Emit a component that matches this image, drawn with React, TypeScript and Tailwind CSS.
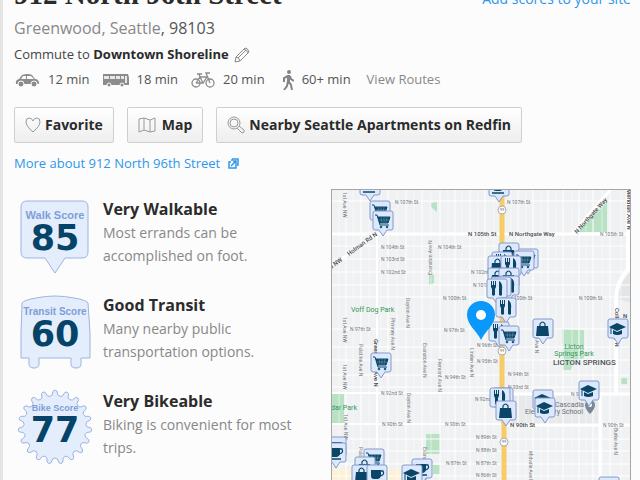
import type { ReactNode } from "react";

type IconName = "cart" | "fork" | "bag" | "cup" | "school";

const markers: { x: number; y: number; icon: IconName }[] = [
  { x: 29, y: -13, icon: "cup" },
  { x: 39, y: 12, icon: "cart" },
  { x: 42, y: 22, icon: "cart" },
  { x: 158, y: -12, icon: "cup" },
  { x: 168, y: 54, icon: "bag" },
  { x: 187, y: 60, icon: "cart" },
  { x: 183, y: 62, icon: "cart" },
  { x: 161, y: 63, icon: "fork" },
  { x: 157, y: 67, icon: "bag" },
  { x: 170, y: 67, icon: "fork" },
  { x: 157, y: 79, icon: "bag" },
  { x: 168, y: 79, icon: "bag" },
  { x: 168, y: 87, icon: "fork" },
  { x: 160, y: 88, icon: "fork" },
  { x: 156, y: 90, icon: "fork" },
  { x: 165, y: 109, icon: "fork" },
  { x: 158, y: 133, icon: "fork" },
  { x: 168, y: 137, icon: "cart" },
  { x: 202, y: 130, icon: "bag" },
  { x: 277, y: 130, icon: "school" },
  { x: 40, y: 164, icon: "cart" },
  { x: -5, y: 248, icon: "cup" },
  { x: -5, y: 254, icon: "cup" },
  { x: 33, y: 260, icon: "cart" },
  { x: 24, y: 268, icon: "bag" },
  { x: 21, y: 276, icon: "bag" },
  { x: 36, y: 276, icon: "cup" },
  { x: 81, y: 270, icon: "cup" },
  { x: 71, y: 276, icon: "school" },
  { x: 162, y: 199, icon: "fork" },
  { x: 159, y: 199, icon: "fork" },
  { x: 165, y: 212, icon: "bag" },
  { x: 202, y: 201, icon: "school" },
  { x: 204, y: 209, icon: "school" },
  { x: 248, y: 192, icon: "school" },
  { x: 268, y: 288, icon: "cup" },
];

const streets: { x: number; y: number; text: string; turn?: number }[] = [
  { x: 64, y: 15, text: "N 107th St" },
  { x: 50, y: 60, text: "N 104th St" },
  { x: 50, y: 72, text: "N 103rd St" },
  { x: 50, y: 85, text: "N 102nd St" },
  { x: 107, y: 60, text: "N 104th St" },
  { x: 140, y: 85, text: "N 102nd St" },
  { x: 142, y: 98, text: "N 101st St" },
  { x: 112, y: 111, text: "N 100th St" },
  { x: 19, y: 142, text: "N 97th St" },
  { x: 113, y: 143, text: "N 97th St" },
  { x: 176, y: 15, text: "N 107th St" },
  { x: 269, y: 47, text: "N 105th St" },
  { x: 248, y: 111, text: "N 100th St" },
  { x: 178, y: 111, text: "N 100th St" },
  { x: 146, y: 158, text: "N 96th St" },
  { x: 146, y: 174, text: "N 95th St" },
  { x: 177, y: 187, text: "N 94th St" },
  { x: 177, y: 200, text: "N 93rd St" },
  { x: 114, y: 190, text: "N 94th St" },
  { x: 50, y: 206, text: "N 92nd St" },
  { x: 144, y: 212, text: "N 92nd St" },
  { x: 240, y: 207, text: "N 92nd St" },
  { x: 51, y: 237, text: "N 90th St" },
  { x: 114, y: 237, text: "N 90th St" },
  { x: 272, y: 238, text: "N 90th St" },
  { x: 145, y: 250, text: "N 89th St" },
  { x: 145, y: 263, text: "N 88th St" },
  { x: 115, y: 276, text: "N 87th St" },
  { x: 145, y: 276, text: "N 87th St" },
  { x: 145, y: 288, text: "N 86th St" },
  { x: 12, y: 3, text: "1st Ave NW", turn: 90 },
  { x: 12, y: 128, text: "1st Ave NW", turn: 90 },
  { x: 12, y: 175, text: "1st Ave NW", turn: 90 },
  { x: 13, y: 225, text: "1st Ave NW", turn: 90 },
  { x: 75, y: 109, text: "Dayton Ave N", turn: 90 },
  { x: 60, y: 129, text: "Phinney Ave N", turn: 90 },
  { x: 28, y: 155, text: "Palatine Ave N", turn: 90 },
  { x: 28, y: 258, text: "Palatine Ave N", turn: 90 },
  { x: 76, y: 204, text: "Dayton Ave N", turn: 90 },
  { x: 92, y: 154, text: "Evanston Ave N", turn: 90 },
  { x: 92, y: 258, text: "Evanston Ave N", turn: 90 },
  { x: 107, y: 170, text: "Fremont Ave N", turn: 90 },
  { x: 139, y: 159, text: "Linden Ave N", turn: 90 },
  { x: 204, y: 137, text: "Stone Ave N", turn: 90 },
  { x: 198, y: 262, text: "Midvale Ave N", turn: 90 },
  { x: 283, y: 239, text: "Burke Ave N", turn: 90 },
  { x: 101, y: 86, text: "Evanston Ave N", turn: -90 },
];

const minorRows = [12, 57, 70, 83, 96, 108, 140, 158, 171, 186, 198, 250, 262, 275, 287];
const minorCols = [15, 30, 57, 75, 91, 109, 124, 139, 154, 187, 202, 217, 232, 248, 262, 279];
const laneCols = [8, 22, 38, 50, 66, 83, 100, 117, 131, 147, 163, 180, 195, 210, 225, 241, 255, 271, 290];

function Glyph({ name }: { name: IconName }) {
  if (name === "cart") {
    return (
      <g fill="none" stroke="#0b4668">
        <path d="M2 4h2l3 10h9" strokeWidth="1" />
        <path d="M5 6h12l-2 6H7z" fill="#0b4668" strokeWidth="1" />
        <path d="M8 6l1 6M11 6v6M14 6l-1 6M6 9h10" stroke="#7e9db8" strokeWidth=".5" />
        <circle cx="8" cy="16" r="1" fill="#0b4668" strokeWidth=".5" />
        <circle cx="14" cy="16" r="1" fill="#0b4668" strokeWidth=".5" />
      </g>
    );
  }
  if (name === "fork") {
    return (
      <g fill="#0b4668">
        <path d="M4 2h1v4h1V2h1v4h1V2h1v6l-1 2v6q-1.500 1.500-3 0v-6L4 8z" />
        <path d="M12 2q4 2 3 9v5q-1 1.500-3 0z" />
      </g>
    );
  }
  if (name === "bag") {
    return (
      <g>
        <path d="M4 7h11l1 10H3z" fill="#0b4668" />
        <path d="M7 8V5q2.500-4 5 0v3" fill="none" stroke="#0b4668" strokeWidth="1.200" />
      </g>
    );
  }
  if (name === "cup") {
    return (
      <g>
        <path d="M4 5h10v6q-1 3-3 3H7q-3 0-3-3z" fill="#0b4668" />
        <path d="M14 6h2q2 4-3 5" fill="none" stroke="#0b4668" strokeWidth="1.300" />
        <path d="M3 16h12" stroke="#0b4668" strokeWidth="1.500" />
      </g>
    );
  }
  return (
    <g fill="#0b4668">
      <path d="M1 8l8-4 9 4-9 4z" />
      <path d="M5 11l4 2 5-2v4q-5 2-9 0z" />
      <path d="M3 8v7" stroke="#0b4668" />
    </g>
  );
}

function NeighborhoodMap() {
  return (
    <svg viewBox="0 0 300 300" className="block w-full" role="img" aria-label="Map of nearby places" fontFamily="Roboto, sans-serif">
      <rect width="300" height="300" fill="#f0f1f3" />
      <path d="M0 280h70v20H0z" fill="#fdf2d8" />
      <path d="M178 206h90v30h-90z" fill="#e7e9eb" />
      <path d="M300 82q-13 13-13 28l13 4z" fill="#e3e5e7" />
      <g fill="#b9e2c5">
        <path d="M247 43l29-30v30z" />
        <path d="M0 205h13v29H0zM95 245h14v20H95zM102 276h7v9h-7zM100 14l6-1v10l-6-5zM98 84l5 2v8l-5 2zM290 189h6v6h-6z" />
        <path d="M231 140l22 1v28l-10 3-3 9h-8z" />
      </g>

      <g stroke="#ffffff" fill="none">
        {laneCols.map((x) => (
          <path key={x} d={`M${x} 0V300`} strokeWidth=".5" />
        ))}
        {minorCols.map((x) => (
          <path key={x} d={`M${x} 0V300`} strokeWidth="1" />
        ))}
        {minorRows.map((y) => (
          <path key={y} d={`M0 ${y}H300`} strokeWidth="1" />
        ))}
        <path d="M46 45V300M0 204H170M0 235H170" strokeWidth="2" />
        <path d="M0 45H300M0 77L46 45M241 45L280 0M178 205H300M172 236H300M269 205V300" strokeWidth="3" />
        <path d="M297 0V80q-12 14-12 30V205" strokeWidth="4" />
      </g>
      <path d="M171 0V210L173 236V300" fill="none" stroke="#f7cb66" strokeWidth="5" />
      {[[171, 21], [171, 162], [173, 253]].map(([x, y]) => (
        <g key={y}>
          <circle cx={x} cy={y} r="4" fill="#fff" stroke="#8c8c8c" strokeWidth=".7" />
          <text x={x} y={y + 1} fontSize="4" textAnchor="middle" fill="#666">99</text>
        </g>
      ))}

      <g fontSize="5" fill="#73777c">
        {streets.map((s, i) => (
          <text key={i} x={s.x} y={s.y} transform={s.turn ? `rotate(${s.turn} ${s.x} ${s.y})` : undefined}>
            {s.text}
          </text>
        ))}
      </g>
      <g fontSize="6" fill="#44484c" fontWeight="500">
        <text x="137" y="47">N 105th St</text>
        <text x="178" y="47">N Northgate Way</text>
        <text x="179" y="238">N 90th St</text>
        <text x="18" y="67" transform="rotate(-36 18 67)">Holman Rd N</text>
        <text x="0" y="80" transform="rotate(-36 0 80)">d NW</text>
        <text x="246" y="45" transform="rotate(-48 246 45)">N Northgate Way</text>
        <text x="43" y="150" transform="rotate(90 43 150)">Greenwood Ave N</text>
        <text x="284" y="119" transform="rotate(90 284 119)">College Way N</text>
        <text x="296" y="0" transform="rotate(90 296 0)">Meridian Ave N</text>
        <text x="292" y="129">N</text>
      </g>
      <g fontSize="7" fill="#319755">
        <text x="20" y="123">Voff Dog Park</text>
        <text x="0" y="221">dar Park</text>
        <text x="243" y="160" textAnchor="middle">Licton</text>
        <text x="243" y="167" textAnchor="middle">Springs Park</text>
      </g>
      <text x="222" y="176" fontSize="8" fontWeight="500" fill="#4e5358">LICTON SPRINGS</text>
      <g fontSize="7" fill="#6c737b">
        <text x="224" y="218">Cascadia</text>
        <text x="194" y="225">Elementary School</text>
      </g>
      <path d="M259 225q-5-5-5-9a5 5 0 0 1 10 0q0 4-5 9z" fill="#788894" />
      <circle cx="259" cy="216" r="2" fill="#fff" />

      {markers.map((m, i) => (
        <g key={i} transform={`translate(${m.x} ${m.y})`}>
          <path
            d="M2 0H18Q20 0 20 2V17Q20 19 18 19H14L10 25L6 19H2Q0 19 0 17V2Q0 0 2 0Z"
            fill="#dce9fc"
            stroke="#8499cb"
          />
          <Glyph name={m.icon} />
        </g>
      ))}

      <path d="M150 151C146 142 136 136 136 126a14 14 0 0 1 28 0C164 136 154 142 150 151z" fill="#0a98fa" />
      <circle cx="150" cy="126" r="5" fill="#fff" />
      <path d="M0 300V.5H299.500V300" fill="none" stroke="#a3a7aa" />
      <path d="M.5 0V300" stroke="#a3a7aa" />
    </svg>
  );
}

function gearPath(cx: number, cy: number, teeth: number) {
  const point = (turn: number, r: number) => {
    const a = turn * Math.PI * 2 - Math.PI / 2;
    return `${(cx + r * Math.cos(a)).toFixed(2)} ${(cy + r * Math.sin(a)).toFixed(2)}`;
  };
  let d = "";
  for (let i = 0; i < teeth; i++) {
    const t = i / teeth;
    const s = 1 / teeth;
    d += `${i ? "L" : "M"}${point(t - s * 0.16, 36)}Q${point(t, 38)} ${point(t + s * 0.16, 36)}`;
    d += `L${point(t + s * 0.28, 32)}Q${point(t + s * 0.5, 30)} ${point(t + s * 0.72, 32)}`;
  }
  return d + "Z";
}

const badgeShapes = {
  walk: "M13 4H68Q74 4 74 10V55Q74 61 68 61H51L41 76L31 61H13Q7 61 7 55V10Q7 4 13 4Z",
  transit: "M8 10Q10 7 22 5Q41 1 60 5Q72 7 74 10L76 40V65H67V71Q67 75 62 75T57 71V65H25V71Q25 75 20 75T15 71V65H7V40Z",
  bike: gearPath(41, 38, 19),
};

function Badge({ kind, label, value }: { kind: keyof typeof badgeShapes; label: string; value: number }) {
  return (
    <svg viewBox="0 0 82 77" className="h-[77px] w-[82px] shrink-0" role="img" aria-label={`${label} ${value}`}>
      <path d={badgeShapes[kind]} fill="#e4edfc" stroke="#9db4df" />
      <text x="41" y="22" textAnchor="middle" fontFamily="Liberation Sans Narrow, Liberation Sans, sans-serif" fontWeight="700" fontSize={kind === "walk" ? 11 : kind === "transit" ? 10 : 9} fill="#7c9fd8">
        {label}
      </text>
      <text x="41" y="53" textAnchor="middle" fontFamily="DejaVu Sans, sans-serif" fontWeight="700" fontSize="35" fill="#054369">
        {value}
      </text>
    </svg>
  );
}

const scores = [
  { kind: "walk", label: "Walk Score", value: 85, title: "Very Walkable", text: "Most errands can be accomplished on foot." },
  { kind: "transit", label: "Transit Score", value: 60, title: "Good Transit", text: "Many nearby public transportation options." },
  { kind: "bike", label: "Bike Score", value: 77, title: "Very Bikeable", text: "Biking is convenient for most trips." },
] as const;

function ActionButton({ icon, children }: { icon: ReactNode; children: ReactNode }) {
  return (
    <button
      type="button"
      className="flex h-9 items-center gap-1 rounded-xs border border-[#cfcfcf] bg-linear-to-b from-white to-[#eeeeee] px-2.5 text-sm font-bold text-[#2b2b2b]"
    >
      {icon}
      {children}
    </button>
  );
}

function Mode({ icon, children }: { icon: ReactNode; children: ReactNode }) {
  return (
    <li className="flex items-center gap-2">
      {icon}
      {children}
    </li>
  );
}

export default function App() {
  return (
    <main className="h-screen overflow-hidden border-l-3 border-[#e4e4e4] bg-[#fcfcfc] pr-[9px] pl-[11px] font-['Open_Sans',sans-serif] text-[13px] text-[#444]">
      <header className="-mt-6 flex items-baseline justify-between">
        <h1 className="font-['Liberation_Serif',serif] text-[29px] leading-9 font-bold text-[#2b2b2b]">912 North 96th Street</h1>
        <a href="#scores" className="text-sm text-[#2f97ea]">Add scores to your site</a>
      </header>

      <p className="mt-1 text-base leading-6 text-[#555]">
        <a href="#greenwood" className="text-[#888]">Greenwood,</a>{" "}
        <a href="#seattle" className="text-[#888]">Seattle</a>, 98103
      </p>

      <div className="mt-[3px] flex h-6 items-center gap-1">
        <p>
          Commute to <strong className="text-[#2b2b2b]">Downtown Shoreline</strong>
        </p>
        <button type="button" aria-label="Edit commute" className="ml-px">
          <svg viewBox="0 0 16 16" className="size-4" fill="none" stroke="#888">
            <path d="M1 15l1-5 9-9q3 0 4 4l-9 9zM2 10q3 0 4 4M10 2q3 1 4 4M4 11l8-8" />
          </svg>
        </button>
      </div>

      <div className="mt-px flex h-6 items-center gap-4 text-[#555]">
        <ul className="flex gap-[13px]">
          <Mode
            icon={
              <svg viewBox="0 0 26 16" className="h-4 w-[26px]">
                <path d="M2 12Q1 8 5 7L8 3q6-2 10 0l3 4q4 0 4 5z" fill="#8c8c8c" />
                <path d="M7 7l2-3h3v3zM13 4h4l3 3h-7z" fill="#fcfcfc" />
                <circle cx="7" cy="12" r="3" fill="#8c8c8c" stroke="#fcfcfc" />
                <circle cx="20" cy="12" r="3" fill="#8c8c8c" stroke="#fcfcfc" />
              </svg>
            }
          >
            12 min
          </Mode>
          <Mode
            icon={
              <svg viewBox="0 0 26 16" className="h-4 w-[26px]">
                <path d="M0 2h25q2 6 1 11H0z" fill="#8c8c8c" />
                <path d="M1 4h5v3H1zM7 4h5v3H7zM13 4h4v3h-4zM18 4h3v3h-3zM22 4h2v7h-2z" fill="#e8e8e8" />
                <circle cx="6" cy="13" r="2" fill="#8c8c8c" stroke="#fcfcfc" />
                <circle cx="19" cy="13" r="2" fill="#8c8c8c" stroke="#fcfcfc" />
              </svg>
            }
          >
            18 min
          </Mode>
          <Mode
            icon={
              <svg viewBox="0 0 24 16" className="h-4 w-6" fill="none" stroke="#8c8c8c" strokeWidth="1.300">
                <circle cx="5" cy="11" r="4" />
                <circle cx="19" cy="11" r="4" />
                <path d="M5 11l4-6 3 6H5M12 11l4-6H9L8 2M19 11L15 1h4M6 2h5" />
              </svg>
            }
          >
            20 min
          </Mode>
          <Mode
            icon={
              <svg viewBox="0 0 12 20" className="ml-1 h-5 w-3" fill="none" stroke="#858585" strokeWidth="2">
                <circle cx="7" cy="2" r="2" fill="#858585" stroke="none" />
                <path d="M5 5h3v7H5z" fill="#858585" stroke="none" />
                <path d="M7 5v7l2 3 1 5M6 11l-1 5-3 4M6 6L2 8v4M8 6l1 3 3 2" />
              </svg>
            }
          >
            60+ min
          </Mode>
        </ul>
        <a href="#routes" className="text-[#888]">View Routes</a>
      </div>

      <div className="mt-[15px] flex gap-[13px]">
        <ActionButton
          icon={
            <svg viewBox="0 0 16 16" className="size-4" fill="none" stroke="#999">
              <path d="M8 15Q1 9 1 5q0-4 3-4 3 0 4 3 1-3 4-3 3 0 3 4 0 4-7 10z" />
            </svg>
          }
        >
          Favorite
        </ActionButton>
        <ActionButton
          icon={
            <svg viewBox="0 0 18 16" className="mr-0.5 h-4 w-[18px]" fill="none" stroke="#999">
              <path d="M1 2l5-1 6 2 5-2v13l-5 1-6-2-5 2zM6 1v12M12 3v12" />
            </svg>
          }
        >
          Map
        </ActionButton>
        <ActionButton
          icon={
            <svg viewBox="0 0 18 18" className="size-[18px]" fill="none" stroke="#999">
              <circle cx="7" cy="7" r="6" />
              <circle cx="7" cy="7" r="4" />
              <path d="M10 12l5 5q3 0 2-3l-5-4" />
            </svg>
          }
        >
          Nearby Seattle Apartments on Redfin
        </ActionButton>
      </div>

      <a href="#more" className="mt-2 flex w-fit items-center gap-2 leading-6 text-[#2f97ea]">
        More about 912 North 96th Street
        <svg viewBox="0 0 11 11" className="size-[11px]" fill="none" stroke="currentColor" strokeWidth="1.500">
          <path d="M3 4H1v6h7V8M4 1h6v6H7M4 1v2M3 8l5-5M5 3h3v3" />
        </svg>
      </a>

      <div className="mt-3.5 grid grid-cols-2 gap-[17px]">
        <section id="scores" className="flex flex-col gap-[19px] pt-2">
          {scores.map((s) => (
            <div key={s.kind} className="flex gap-[7px]">
              <Badge kind={s.kind} label={s.label} value={s.value} />
              <div>
                <h2 className="text-base leading-6 font-bold text-[#2b2b2b]">{s.title}</h2>
                <p className="text-sm leading-[23px] text-[#888]">{s.text}</p>
              </div>
            </div>
          ))}
        </section>
        <NeighborhoodMap />
      </div>
    </main>
  );
}
